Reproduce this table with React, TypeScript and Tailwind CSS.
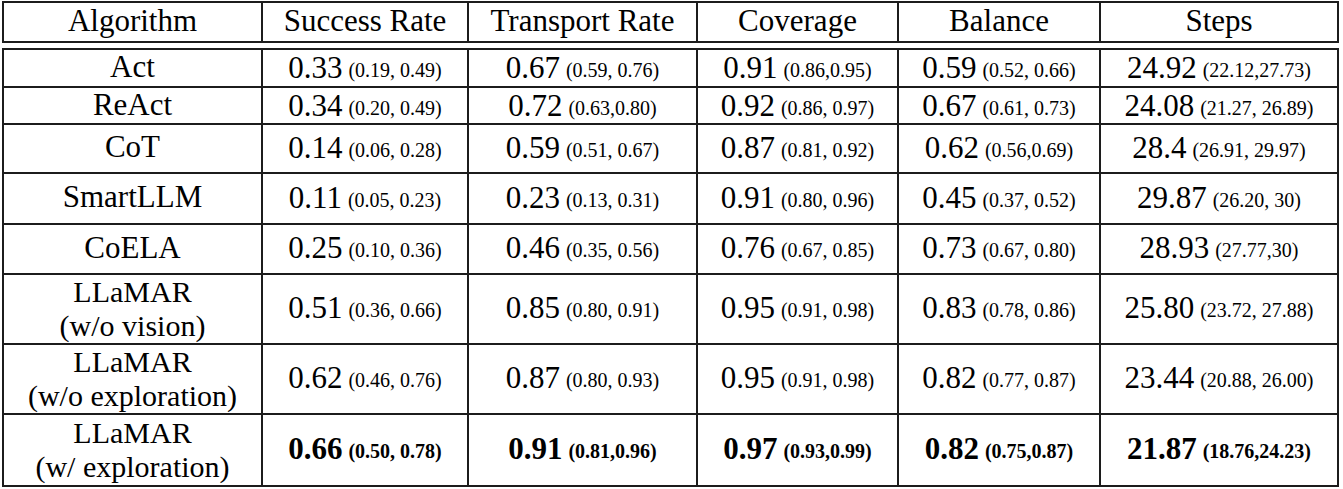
const cols = 'grid-cols-[259px_206px_229px_201px_202px_1fr]';

type Row = {
  name: string[];
  cells: [string, string][];
  h: string;
  bold?: boolean;
};

const rows: Row[] = [
  { name: ['Act'], h: 'h-[38px]', cells: [['0.33', '(0.19, 0.49)'], ['0.67', '(0.59, 0.76)'], ['0.91', '(0.86,0.95)'], ['0.59', '(0.52, 0.66)'], ['24.92', '(22.12,27.73)']] },
  { name: ['ReAct'], h: 'h-[37px]', cells: [['0.34', '(0.20, 0.49)'], ['0.72', '(0.63,0.80)'], ['0.92', '(0.86, 0.97)'], ['0.67', '(0.61, 0.73)'], ['24.08', '(21.27, 26.89)']] },
  { name: ['CoT'], h: 'h-[49px]', cells: [['0.14', '(0.06, 0.28)'], ['0.59', '(0.51, 0.67)'], ['0.87', '(0.81, 0.92)'], ['0.62', '(0.56,0.69)'], ['28.4', '(26.91, 29.97)']] },
  { name: ['SmartLLM'], h: 'h-[51px]', cells: [['0.11', '(0.05, 0.23)'], ['0.23', '(0.13, 0.31)'], ['0.91', '(0.80, 0.96)'], ['0.45', '(0.37, 0.52)'], ['29.87', '(26.20, 30)']] },
  { name: ['CoELA'], h: 'h-[50px]', cells: [['0.25', '(0.10, 0.36)'], ['0.46', '(0.35, 0.56)'], ['0.76', '(0.67, 0.85)'], ['0.73', '(0.67, 0.80)'], ['28.93', '(27.77,30)']] },
  { name: ['LLaMAR', '(w/o vision)'], h: 'h-[70px]', cells: [['0.51', '(0.36, 0.66)'], ['0.85', '(0.80, 0.91)'], ['0.95', '(0.91, 0.98)'], ['0.83', '(0.78, 0.86)'], ['25.80', '(23.72, 27.88)']] },
  { name: ['LLaMAR', '(w/o exploration)'], h: 'h-[70px]', cells: [['0.62', '(0.46, 0.76)'], ['0.87', '(0.80, 0.93)'], ['0.95', '(0.91, 0.98)'], ['0.82', '(0.77, 0.87)'], ['23.44', '(20.88, 26.00)']] },
  { name: ['LLaMAR', '(w/ exploration)'], h: 'h-[70px]', bold: true, cells: [['0.66', '(0.50, 0.78)'], ['0.91', '(0.81,0.96)'], ['0.97', '(0.93,0.99)'], ['0.82', '(0.75,0.87)'], ['21.87', '(18.76,24.23)']] },
];

const headers = ['Algorithm', 'Success Rate', 'Transport Rate', 'Coverage', 'Balance', 'Steps'];

export default function App() {
  return (
    <div className="w-[1343px] h-[489px] bg-white text-black pt-[1px] pl-[2px] font-['Liberation_Serif','DejaVu_Serif',serif]">
      <div className="w-[1337px]">
        {/* header box */}
        <div className={`grid ${cols} h-[42px] border-2 border-[#1c1c1c]`}>
          {headers.map((h, i) => (
            <div
              key={h}
              className={`flex items-center justify-center text-[31px] leading-none pb-[4px] ${i < 5 ? 'border-r-2 border-[#1c1c1c]' : ''}`}
            >
              {h}
            </div>
          ))}
        </div>

        {/* body box */}
        <div className="mt-[5px] border-2 border-[#1c1c1c]">
          {rows.map((r, ri) => (
            <div
              key={ri}
              className={`grid ${cols} ${r.h} ${ri < rows.length - 1 ? 'border-b-2 border-[#1c1c1c]' : ''}`}
            >
              <div className={`flex items-center justify-center border-r-2 border-[#1c1c1c] ${r.name.length > 1 ? 'text-[30px]' : 'text-[31px] pb-[3px]'}`}>
                <p className="text-center leading-[34px]">
                  {r.name[0]}
                  {r.name[1] && (
                    <>
                      <br />
                      {r.name[1]}
                    </>
                  )}
                </p>
              </div>
              {r.cells.map(([v, ci], i) => (
                <div
                  key={i}
                  className={`flex items-center justify-center pb-[3px] ${i < 4 ? 'border-r-2 border-[#1c1c1c]' : ''} ${r.bold ? 'font-bold' : ''}`}
                >
                  <span className="text-[31px] leading-none">{v}</span>
                  <span className="text-[20px] leading-none ml-[6px] pt-[5px]">{ci}</span>
                </div>
              ))}
            </div>
          ))}
        </div>
      </div>
    </div>
  );
}
